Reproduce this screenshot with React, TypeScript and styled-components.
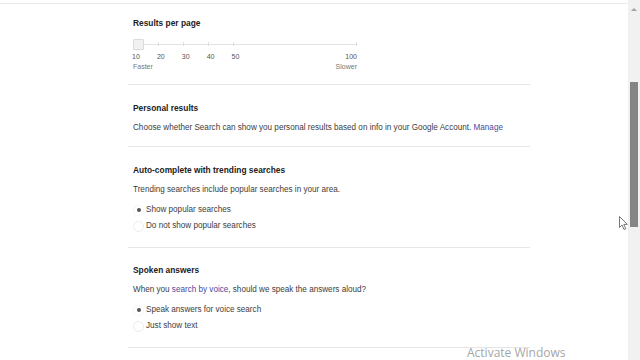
import React from "react";
import styled, { createGlobalStyle } from "styled-components";

const Global = createGlobalStyle`
  html, body { margin: 0; padding: 0; background: #fff; }
  body { font-family: Arial, "Liberation Sans", sans-serif; width: 640px; height: 360px; overflow: hidden; }
`;

const Page = styled.div`
  position: relative;
  display: flex;
  width: 640px;
  height: 360px;
  overflow: hidden;
  background: #fff;
`;

const Main = styled.div`
  flex: 1;
  display: flex;
  flex-direction: column;
`;

const TopEdge = styled.div`
  height: 3px;
  border-bottom: 1px solid #e9e9e9;
  flex-shrink: 0;
`;

const Column = styled.div`
  margin-left: 128px;
  width: 402px;
  display: flex;
  flex-direction: column;
`;

const Section = styled.section<{ $top: number; $bottom: number }>`
  padding: ${(p) => p.$top}px 0 ${(p) => p.$bottom}px 5px;
  border-bottom: 1px solid #e6e6e6;
  display: flex;
  flex-direction: column;
`;

const Title = styled.div`
  font-size: 8.4px;
  line-height: 12px;
  font-weight: bold;
  color: #222;
`;

const Desc = styled.div`
  margin-top: 8px;
  font-size: 8.15px;
  line-height: 12px;
  color: #3d3d3d;
  white-space: nowrap;
`;

const Link = styled.span`
  color: #4a47a0;
`;

const Options = styled.div`
  margin-top: 8px;
  display: flex;
  flex-direction: column;
  gap: 4px;
`;

const Option = styled.label`
  display: flex;
  align-items: center;
  gap: 2px;
  font-size: 8.15px;
  line-height: 12px;
  color: #3d3d3d;
`;

const Radio = styled.span<{ $checked: boolean }>`
  width: 9px;
  height: 9px;
  border-radius: 50%;
  border: 1px solid ${(p) => (p.$checked ? "#f6f6f6" : "#ececec")};
  display: flex;
  align-items: center;
  justify-content: center;
  flex-shrink: 0;
  &::after {
    content: "";
    width: 4px;
    height: 4px;
    border-radius: 50%;
    background: ${(p) => (p.$checked ? "#555" : "transparent")};
  }
`;

const SliderBox = styled.div`
  margin-top: 10px;
  width: 224px;
  display: flex;
  flex-direction: column;
`;

const Track = styled.div`
  position: relative;
  height: 11px;
  &::before {
    content: "";
    position: absolute;
    left: 0;
    right: 0;
    top: 5px;
    height: 1px;
    background: #e2e2e2;
  }
`;

const Thumb = styled.div`
  position: absolute;
  left: 0;
  top: 0;
  width: 9px;
  height: 9px;
  border: 1px solid #dcdcdc;
  background: #f1f1f1;
  border-radius: 1px;
`;

const Tick = styled.div`
  position: absolute;
  top: 3px;
  width: 1px;
  height: 4px;
  background: #dedede;
`;

const Labels = styled.div`
  position: relative;
  height: 9px;
  margin-top: 2px;
`;

const NumLabel = styled.span<{ $end?: boolean }>`
  position: absolute;
  top: 0;
  font-size: 7px;
  line-height: 9px;
  color: #555;
  transform: ${(p) => (p.$end ? "translateX(-100%)" : "none")};
`;

const EndLabels = styled.div`
  margin-top: 1px;
  display: flex;
  justify-content: space-between;
  font-size: 7px;
  line-height: 9px;
  color: #777;
`;

const Scrollbar = styled.div`
  width: 12px;
  background: #f1f1f1;
  display: flex;
  flex-direction: column;
  align-items: center;
  flex-shrink: 0;
`;

const Arrow = styled.div`
  margin-top: 8px;
  width: 0;
  height: 0;
  border-left: 3px solid transparent;
  border-right: 3px solid transparent;
  border-bottom: 3px solid #a3a3a3;
`;

const ScrollThumb = styled.div`
  margin-top: 71px;
  width: 8px;
  height: 145px;
  background: #858585;
`;

const Watermark = styled.div`
  position: absolute;
  left: 467px;
  top: 345px;
  font-family: "Open Sans", "Liberation Sans", sans-serif;
  font-size: 12px;
  line-height: 16px;
  color: #a6a6a6;
`;

const Cursor = styled.svg`
  position: absolute;
  left: 619px;
  top: 216px;
`;

const ticks = [10, 20, 30, 40, 50, 100];
const pos = (v: number) => ((v - 10) / 90) * 224;

export default function App() {
  return (
    <>
      <Global />
      <Page>
        <Main>
          <TopEdge />
          <Column>
            <Section $top={13} $bottom={13}>
              <Title>Results per page</Title>
              <SliderBox>
                <Track>
                  {ticks.slice(1).map((t) => (
                    <Tick key={t} style={{ left: Math.min(pos(t), 223) }} />
                  ))}
                  <Thumb />
                </Track>
                <Labels>
                  {ticks.map((t) => (
                    <NumLabel key={t} $end={t === 100} style={{ left: t === 100 ? 224 : pos(t) - 1 }}>
                      {t}
                    </NumLabel>
                  ))}
                </Labels>
                <EndLabels>
                  <span>Faster</span>
                  <span>Slower</span>
                </EndLabels>
              </SliderBox>
            </Section>
            <Section $top={17} $bottom={12}>
              <Title>Personal results</Title>
              <Desc>
                Choose whether Search can show you personal results based on info in your Google Account.{" "}
                <Link>Manage</Link>
              </Desc>
            </Section>
            <Section $top={17} $bottom={15}>
              <Title>Auto-complete with trending searches</Title>
              <Desc>Trending searches include popular searches in your area.</Desc>
              <Options>
                <Option>
                  <Radio $checked />
                  Show popular searches
                </Option>
                <Option>
                  <Radio $checked={false} />
                  Do not show popular searches
                </Option>
              </Options>
            </Section>
            <Section $top={16} $bottom={15}>
              <Title>Spoken answers</Title>
              <Desc>
                When you <Link>search by voice</Link>, should we speak the answers aloud?
              </Desc>
              <Options>
                <Option>
                  <Radio $checked />
                  Speak answers for voice search
                </Option>
                <Option>
                  <Radio $checked={false} />
                  Just show text
                </Option>
              </Options>
            </Section>
          </Column>
        </Main>
        <Scrollbar>
          <Arrow />
          <ScrollThumb />
        </Scrollbar>
        <Watermark>Activate Windows</Watermark>
        <Cursor width="10" height="15" viewBox="0 0 10 15">
          <path d="M0.5 0.5 L0.5 11.5 L3 9 L5 13.5 L6.8 12.7 L4.8 8.4 L8.3 8.4 Z" fill="#fff" stroke="#555" strokeWidth="0.8" />
        </Cursor>
      </Page>
    </>
  );
}
